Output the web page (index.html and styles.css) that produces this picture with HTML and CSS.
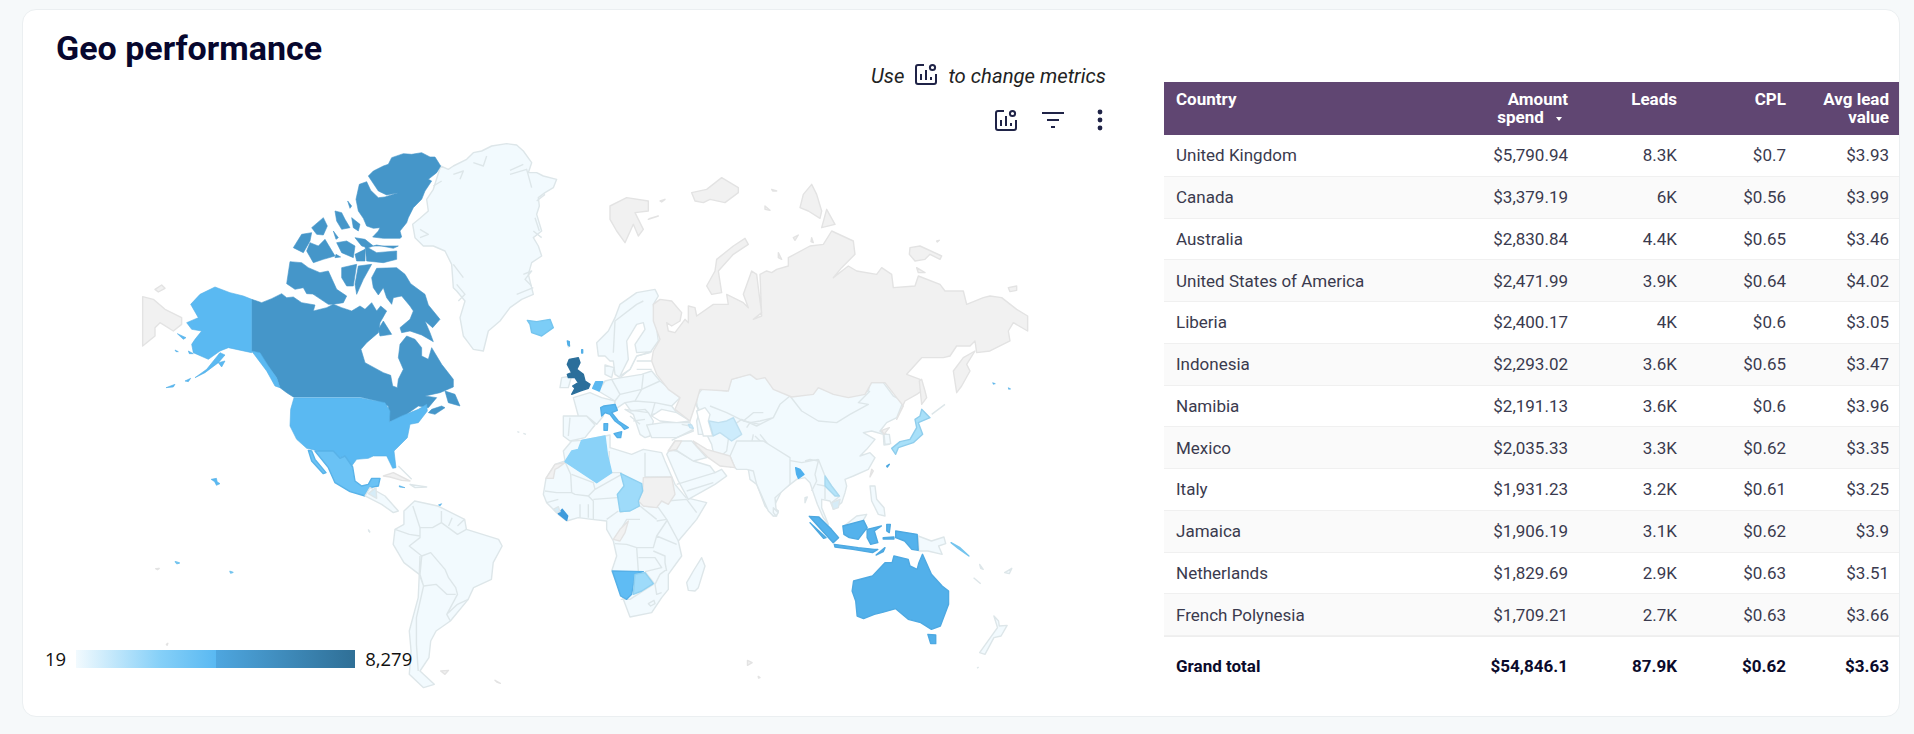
FILE: index.html
```html
<!DOCTYPE html>
<html lang="en">
<head>
<meta charset="utf-8">
<title>Geo performance</title>
<link rel="stylesheet" href="styles.css">
</head>
<body>
<main class="card">
  <section class="geo">
    <h1 class="title">Geo performance</h1>
    <p class="note">Use
      <svg class="ico note-ico" viewBox="0 0 24 24"><path d="M10 3H4a2 2 0 0 0-2 2v15a2 2 0 0 0 2 2h16a2 2 0 0 0 2-2v-8"/><path d="M7 18v-6M12 18V8M17 18v-3"/><circle cx="18.5" cy="5.5" r="2.6"/></svg>
      to change metrics</p>
    <div class="tools">
      <svg class="ico" viewBox="0 0 24 24"><path d="M10 3H4a2 2 0 0 0-2 2v15a2 2 0 0 0 2 2h16a2 2 0 0 0 2-2v-8"/><path d="M7 18v-6M12 18V8M17 18v-3"/><circle cx="18.5" cy="5.5" r="2.6"/></svg>
      <svg class="ico" viewBox="0 0 24 24"><path d="M1 5h22M6 12h12M10 19h4"/></svg>
      <svg class="ico dots" viewBox="0 0 24 24"><circle cx="12" cy="4" r="2.4"/><circle cx="12" cy="12" r="2.4"/><circle cx="12" cy="20" r="2.4"/></svg>
    </div>
    <div class="map-wrap">
      <svg class="map" viewBox="23 133 1141 583">
        <!-- Americas north, Greenland, Iceland: reference crop at 120,130 -->
        <g transform="translate(120 130) scale(.33333)">
          <path class="l" d="M962 105L985 115 1000 105 1040 85 1060 65 1085 60 1115 45 1160 38 1190 42 1210 60 1235 95 1225 125 1250 125 1270 135 1310 145 1300 170 1275 185 1255 200 1258 225 1250 250 1265 300 1240 320 1255 345 1265 375 1235 395 1225 430 1240 490 1205 505 1170 530 1140 570 1105 600 1090 660 1060 655 1045 635 1030 615 1020 560 1035 510 1010 480 1000 470 995 400 975 360 940 345 910 345 885 320 878 280 900 262 925 240 920 205 940 175Z"/>
          <path class="ln" d="M1000 130L1030 120 1020 145M1060 95L1090 105 1100 75M1170 130L1220 115 1235 170M1170 118L1210 100M1245 260L1258 300M1240 300L1265 320M1210 430L1235 420 1215 445 1235 465M1190 490L1240 470M1010 460L1035 490 1015 510M1000 400L1030 440M900 295L925 310 900 320M940 165L965 150M1250 210L1275 190"/>
          <path class="g" d="M68 497L100 505 135 535 185 560 185 580 160 600 120 575 105 590 105 615 68 645Z"/>
          <path class="g" d="M105 475L125 462 135 472 115 483Z"/>
          <g class="ca">
            <path d="M745 135L760 120 790 105 805 100 815 80 850 68 875 70 905 65 930 78 945 78 962 105 950 125 925 145 935 150 915 180 905 205 880 230 865 260 860 275 840 300 845 318 840 322 790 322 758 318 775 300 780 290 760 292 740 285 730 262 715 240 708 205 718 160 740 152 752 178 775 200 795 198 835 185 800 192 775 180Z"/>
            <path d="M683 210L695 225 690 232ZM645 240L665 245 675 265 690 290 665 295 650 270ZM695 260L720 280 715 300 700 290ZM575 290L610 260 622 285 610 312 590 310ZM520 350L545 310 575 305 570 330 550 365ZM560 360L570 335 595 345 615 325 645 375 610 385 580 395ZM640 300L655 320 648 325ZM650 335L680 330 705 345 700 380 665 365ZM705 320L735 325 760 345 745 350 725 345ZM735 345L770 365 830 360 830 385 790 395 740 390ZM760 345L835 345 820 352 770 342ZM705 370L735 355 735 390 710 390ZM648 370L662 378 645 380Z"/>
            <path d="M510 392L545 395 565 410 600 425 625 420 650 475 680 495 670 515 640 520 625 520 580 490 595 490 560 488 550 470 525 475 500 458Z"/>
            <path d="M665 410L710 400 700 465 680 465 665 440ZM715 405L755 400 730 445 710 490 705 460Z"/>
            <path d="M755 440L770 412 830 410 855 430 872 458 915 490 925 522 960 565 938 590 915 570 930 605 940 632 905 612 870 600 845 605 840 590 870 565 880 540 870 525 845 495 820 500 815 520 800 500 790 470 775 492 760 470Z"/>
            <path d="M395 505L425 515 455 503 485 488 500 500 520 498 545 515 585 522 580 540 620 530 640 520 665 530 695 540 720 525 735 535 755 515 770 540 782 525 800 540 780 575 775 605 740 635 723 655 735 695 790 725 812 733 818 765 832 770 835 745 850 715 835 680 840 640 860 615 885 625 905 650 905 675 925 685 935 650 965 700 1000 745 1000 768 960 785 915 795 950 800 925 830 895 825 845 860 808 872 805 825 770 810 720 798 520 798 500 785 480 770 470 740 440 700 395 660Z"/>
            <path d="M790 570L815 610 780 615 775 595ZM975 780L1005 790 1020 825 985 815ZM925 845L945 850 975 830 965 825 935 835Z"/>
          </g>
          <g class="us">
            <path d="M395 505L370 495 330 485 285 468 240 490 212 520 235 560 200 575 215 595 245 600 225 625 215 640 220 665 265 685 300 660 325 650 395 665Z"/>
            <path d="M395 660L420 665 445 705 470 740 480 770 465 765 440 720 410 680ZM300 665L315 672 295 695 255 725 225 740 260 715ZM172 608L198 620 190 625ZM165 657L175 662 168 662ZM205 660L220 668 208 668ZM295 695L315 690 305 708ZM195 750L212 742 205 752ZM138 770L165 760 160 768Z"/>
          </g>
          <path class="is" d="M1222 568L1250 572 1290 565 1300 590 1265 615 1235 605 1230 580Z"/>
          <path class="l" d="M1345 632L1350 645 1345 648Z"/>
        </g>
        <!-- Eurasia light land: reference crop at 730,370 -->
        <g transform="translate(730 370) scale(.33333)">
          <path class="l" d="M-100 75L-80 50-10 60 5 25 55 10 110 20 180 75 265 50 320 70 355 75 415 60 420 35 460 35 490 75 520 90 500 140 470 155 450 180 470 190 478 220 462 222 460 190 425 180 400 185 435 205 410 235 390 255 420 245 435 260 415 295 370 315 345 325 350 345 345 365 335 395 310 415 300 390 275 385 275 410 295 460 280 440 262 400 250 365 240 335 225 320 200 325 155 360 130 410 145 420 130 435 105 405 80 340 60 325 55 295 0 285-45 270-55 220-70 190-95 190-100 150-90 120-100 105Z"/>
          <path class="ln" d="M180 75L150 100 130 140 90 150 60 155 50 170M180 75L215 120 265 150 320 155 360 130 415 100 385 95 420 60M90 190L130 240 160 265 215 275 265 265M0 170L35 145 80 165 130 140M0 290L60 240 70 190M55 285L100 220 75 195M225 270L240 265 265 270 255 310 260 330 245 360M260 340L285 345 285 385M265 265L285 315M330 375L305 395M-60 160L0 170M-45 270L-10 240 0 170M60 240L130 240M450 180L462 190"/>
          <path class="l" d="M420 345L435 345 440 385 462 410 465 435 445 430 425 390ZM345 463L380 435 410 430 400 448 385 465ZM225 380L232 378 225 395ZM132 410L145 420 135 435ZM462 190L478 190 482 218 465 220Z"/>
          <path class="g" d="M425 295L430 300 420 318ZM462 190L478 170 455 178Z"/>
          <path class="gov" d="M305 395L330 385 325 410 310 415Z"/>
          <path class="bd" d="M197 290L210 295 222 310 205 322 200 310Z"/>
          <path class="la" d="M285 315L305 345 328 375 315 375 285 345Z"/>
          <path class="jp" d="M575 115L600 140 565 155 578 190 550 215 505 230 497 250 485 232 510 212 540 205 560 170 555 145 570 135Z"/>
          <path class="ln" d="M605 130L645 100"/>
          <path class="id" d="M470 285L478 280 472 288Z"/>
        </g>
        <!-- Europe: reference crop at 530,280 -->
        <g transform="translate(530 280) scale(.33333)">
          <path class="l" d="M200 185L235 150 255 110 270 70 320 35 375 25 385 45 370 70 385 180 360 215 320 225 300 265 270 290 255 280 250 240 240 240 225 225 205 225Z"/>
          <path class="w" d="M340 125L320 130 290 180 295 235 270 285 300 265 320 225 365 212 320 215 315 190 345 145Z"/>
          <path class="ln" d="M250 215L255 120 320 70M320 70L340 60"/>
          <path class="l" d="M130 350L180 335 215 350 255 360 250 385 215 380 220 405 200 430 170 405 145 405ZM100 405L170 405 195 432 165 470 120 480 100 465ZM95 290L125 285 115 320 90 320ZM225 252L252 260 245 290 225 280Z"/>
          <path class="l" d="M255 360L205 330 225 300 245 295 275 290 335 280 365 270 390 300 450 350 425 375 440 395 395 395 365 400 345 440 310 400 285 365 255 385Z"/>
          <path class="l" d="M285 385L310 400 330 460 345 470 360 465 370 420 355 395Z"/>
          <path class="w" d="M365 405L395 385 440 395 480 420 440 425 390 420Z"/>
          <path class="l" d="M350 432L400 425 440 425 480 425 490 450 440 470 365 470Z"/>
          <path class="ln" d="M245 295L270 340 255 360M270 340L335 325 340 280M335 325L390 300M335 325L315 360 285 365M315 360L375 365 425 375M375 365L365 400M300 390L345 385 355 395M300 405L330 430M455 430L480 435M120 410L115 465M310 420L345 415M320 240L365 240M320 265L365 265"/>
          <path class="w" d="M500 390L525 380 540 400 535 420 548 465 520 465 515 445 505 410Z"/>
          <path class="tm" d="M537 420L565 425 590 420 610 410 635 460 605 480 570 455 550 465Z"/>
          <path class="ln" d="M495 350L505 390M540 375L590 395 640 420 690 430M640 420L670 395 700 395"/>
          <path class="uk" d="M112 250L118 235 145 230 150 245 140 265 160 280 165 300 180 310 175 322 150 330 125 340 135 322 128 315 145 305 135 290 115 290 112 280 125 275Z"/>
          <path class="nl" d="M197 302L218 302 208 330 188 322Z"/>
          <path class="it" d="M212 380L222 375 255 370 262 388 245 395 265 420 295 440 283 445 275 435 255 420 240 400 225 395 215 405Z"/>
          <path class="it" d="M252 458L275 452 272 470 262 470ZM222 428L233 428 232 448 222 448ZM112 180L118 182 118 195 114 192ZM155 206L158 206 158 216 155 216Z"/>
          <path class="ln" d="M425 478L490 445"/>
          <path class="tm" d="M475 430L485 432 490 442 480 440Z"/>
        </g>
        <!-- Africa, Arabia: reference crop at 530,440 -->
        <g transform="translate(530 440) scale(.33333)">
          <path class="l" d="M48 112L75 70 105 60 100 30 125 0 155 -2 225 -15 240 -18 240 20 305 40 340 25 395 35 405 60 435 130 468 170 530 185 500 235 445 300 455 345 415 400 415 445 395 470 365 515 300 528 280 475 245 390 260 345 250 300 230 265 230 240 185 235 145 230 110 240 85 220 50 185 40 160Z"/>
          <path class="l" d="M410 40L420 25 440 30 490 60 540 75 555 95 575 85 590 105 555 130 475 175 445 120Z"/>
          <path class="l" d="M415 30L435 0 485 0 530 50 490 60 440 28Z"/>
          <path class="l" d="M515 350L525 375 505 440 495 450 475 448 470 425 490 390Z"/>
          <path class="l" d="M600 45L620 0 700 0 780 50 780 130 735 170 740 225 730 225 715 210 680 130 670 90 650 85 620 85 615 80Z"/>
          <path class="l" d="M730 200L745 215 738 225 730 215Z"/>
          <path class="ln" d="M345 35L345 108 425 108M238 30L235 95 275 95M45 150L80 155 125 155 122 100 105 62M125 100L190 125 195 145 175 165 135 160 125 155M195 145L275 100M175 165L190 180 190 235M190 175L262 170M230 235L265 210M270 215L330 195 380 235M340 195L385 200 410 235 380 240M330 235L290 235 270 270M410 235L445 300M410 240L380 285 440 310M380 285L370 320 320 320 290 310 255 308M320 320L325 390M370 330L405 345 405 365 410 390M325 350L375 350 395 380 345 392M345 392L375 430 390 400 410 385M375 430L380 460 395 455M272 475L300 475 370 430M470 150L550 125M410 180L470 175 500 215M440 130L555 95M150 190L150 230M175 190L175 230M50 185L85 175"/>
          <path class="ln" d="M355 488L372 478 375 488 362 495Z"/>
          <path class="g" d="M48 112L75 70 105 65 85 80 75 85 70 112ZM340 110L425 108 435 160 415 190 395 180 380 200 340 195 325 180 338 150ZM295 240L285 275 270 300 250 295 270 265ZM490 0L530 25 600 45 615 80 570 75 535 50 500 15ZM415 30L435 0 455 0 440 25Z"/>
          <path class="dz" d="M155 -2L225 -15 232 40 245 95 200 125 105 62 125 30 145 25Z"/>
          <path class="td" d="M272 97L335 128 338 150 325 180 328 195 300 210 270 212 262 160 282 135Z"/>
          <path class="na" d="M247 390L340 392 315 400 305 460 290 475 272 465Z"/>
          <path class="td" d="M315 400L345 395 370 428 335 450 310 460Z"/>
          <path class="lr" d="M85 218L97 205 113 225 110 238Z"/>
          <path class="gov" d="M70 205L85 197 90 212 80 215Z"/>
        </g>
        <!-- North and middle America: reference crop at 270,370 -->
        <g transform="translate(270 370) scale(.33333)">
          <g class="us">
            <path d="M72 80L270 80 345 95 360 120 358 153 395 135 445 115 470 100 472 120 445 155 420 160 412 200 372 240 378 290 368 292 350 255 310 255 295 262 260 265 245 285 225 255 205 262 190 240 145 240 110 232 80 205 60 165 62 115Z"/>
          </g>
          <path class="mx" d="M135 240L190 240 210 262 225 255 248 288 255 330 275 345 295 340 305 322 330 322 325 345 300 350 285 375 240 362 195 335 175 290Z"/>
          <path class="mx" d="M115 238L125 240 135 265 168 305 160 308 125 270Z"/>
          <path class="l" d="M285 375L300 350 345 375 385 420 370 425 335 400Z"/>
          <path class="gov" d="M295 368L318 350 320 382Z"/>
          <path class="g" d="M340 315L370 305 420 330 395 328 360 318Z"/>
          <path class="l" d="M420 340L470 348 435 350Z"/>
          <path class="us" d="M388 344L405 350 388 348ZM505 402L515 398 510 405Z"/>
          <path class="ln" d="M385 285L410 310 425 325M295 478L300 484M742 182L748 184M760 187L768 190"/>
        </g>
        <!-- South America and ocean islands: reference crop at 20,430 -->
        <g transform="translate(20 430) scale(.35714 .33333)">
          <path class="l" d="M1075 240L1105 210 1170 225 1245 265 1250 295 1340 325 1350 345 1325 395 1320 445 1270 470 1255 505 1205 570 1165 600 1150 630 1145 680 1120 720 1160 760 1130 770 1090 730 1095 660 1090 600 1115 500 1118 430 1075 395 1045 340 1050 295 1075 280Z"/>
          <path class="ln" d="M1250 295L1225 310 1180 275 1155 290 1120 290 1120 320 1090 345 1125 375 1150 365 1190 415 1200 440 1220 470 1225 490 1195 550 1205 570M1100 225L1120 290M1050 295L1090 310 1120 315M1120 375L1118 430M1125 375L1120 430 1130 465 1165 460 1195 490 1220 490M1118 430L1130 465 1110 560 1110 640 1115 720M1195 550L1225 520 1255 505M1180 240L1180 275M1210 260L1200 285M1245 265L1225 285"/>
          <path class="g" d="M1178 720L1200 718 1190 730ZM1330 748L1345 757 1335 753ZM380 413L390 412 385 416ZM410 640L414 637 412 643Z"/>
          <path class="us" d="M535 145L550 142 552 152 560 158 550 163 545 152Z"/>
          <path class="is" d="M435 392L446 396 440 398ZM588 421L596 424 590 426Z"/>
          <path class="ln" d="M975 295L980 304"/>
        </g>
        <!-- Russia and Arctic: reference crop at 600,130 -->
        <g transform="translate(600 130) scale(.33333)">
          <path class="g" d="M180 505L215 510 245 545 240 570 215 585 200 575 205 600 225 605 255 565 265 575 265 525 285 530 290 555 340 520 385 520 380 490 430 515 445 530 430 490 455 420 470 430 480 510 485 545 460 565 485 555 480 430 500 420 515 425 530 415 565 405 565 380 630 345 670 340 695 300 760 330 765 370 725 410 700 440 745 405 770 420 830 430 845 410 875 430 880 470 945 465 955 435 1020 460 1035 480 1090 480 1100 520 1150 500 1170 495 1205 500 1250 535 1283 555 1283 600 1240 575 1225 600 1230 630 1170 660 1130 665 1125 630 1110 645 1070 645 1050 675 1030 680 965 680 920 730 960 745 965 780 950 790 915 810 890 865 910 825 890 800 855 755 815 755 795 790 745 800 700 790 655 770 640 790 575 798 520 775 495 740 470 745 450 730 395 745 385 780 300 775 290 810 270 870 225 835 240 800 205 775 170 730 155 690 160 660 180 625 160 570 160 520Z"/>
          <path class="g" d="M1070 785L1060 720 1090 680 1125 660 1100 700 1110 720 1085 765ZM965 745L975 780 980 800 965 820 958 750ZM335 490L320 465 345 420 350 385 400 345 435 322 445 340 400 370 355 420 365 485ZM30 225L80 200 145 210 145 240 105 245 130 295 115 315 100 280 75 335 50 300 30 265ZM275 185L320 175 365 140 415 170 415 185 375 215 330 205 310 215 285 210ZM610 190L635 160 650 190 665 240 660 262 625 240 600 230ZM680 235L705 280 665 290ZM930 350L960 345 1025 375 1020 385 990 370 975 385 945 390 928 370ZM950 410L975 425 955 425ZM1225 470L1250 465 1250 478 1230 482ZM495 225L510 238 495 235ZM580 320L595 312 585 328ZM635 320L640 335 633 332ZM535 365L545 385 535 380ZM515 175L530 180 518 180ZM180 210L195 205 185 213ZM145 265L175 255 150 262ZM1010 330L1018 328 1012 333Z"/>
          <path class="us" d="M1178 755L1186 758 1180 760ZM1225 770L1232 774 1226 775Z"/>
        </g>
        <!-- Indonesia, Oceania: reference crop at 560,430 -->
        <g transform="translate(560 430) scale(.35714 .33333)">
          <path class="l" d="M1003 315L1040 330 1075 318 1080 338 1060 345 1070 370 1030 360 1005 360ZM1215 555L1228 570 1230 585 1252 583 1235 615 1215 620 1190 670 1175 665 1205 620 1225 590Z"/>
          <path class="l" d="M1175 400L1185 415 1178 412ZM1245 425L1265 412 1258 428Z"/>
          <path class="g" d="M525 688L538 695 525 703ZM555 736L560 740 556 741Z"/>
          <path class="ln" d="M1158 440L1178 458M1168 712L1172 708"/>
          <g class="ids">
            <path d="M698 256L725 258 760 295 780 320 765 335 735 300ZM768 340L835 350 880 355 890 355 875 365 820 355 770 348ZM792 285L850 268 860 290 835 325 810 320 795 310ZM860 295L900 285 880 300 890 335 870 340 860 320ZM905 320L935 318 935 324 905 324ZM885 372L910 350 905 362ZM915 280L925 280 922 305 915 300ZM940 300L1000 310 1003 358 985 355 965 330 940 320ZM700 275L745 320 738 322Z"/>
          </g>
          <path class="is" d="M1095 335L1120 350 1145 375 1115 352Z"/>
          <path class="au" d="M822 450L875 435 910 395 930 395 935 375 975 385 980 405 1000 415 1005 395 1015 370 1040 430 1070 465 1088 480 1088 520 1065 585 1040 595 1010 575 975 565 940 533 900 545 880 550 850 563 832 555 828 510 818 480Z"/>
          <path class="au" d="M1030 610L1052 612 1052 638 1038 638Z"/>
        </g>
      </svg>
      <div class="legend">
        <span>19</span>
        <div class="ramp"></div>
        <span>8,279</span>
      </div>
    </div>
  </section>
  <section class="table">
    <div class="row head">
      <div class="cell name">Country</div>
      <div class="cell">Amount<br>spend <span class="sort"></span></div>
      <div class="cell">Leads</div>
      <div class="cell">CPL</div>
      <div class="cell">Avg lead<br>value</div>
    </div>
    <div class="row"><div class="cell name">United Kingdom</div><div class="cell">$5,790.94</div><div class="cell">8.3K</div><div class="cell">$0.7</div><div class="cell">$3.93</div></div>
    <div class="row alt"><div class="cell name">Canada</div><div class="cell">$3,379.19</div><div class="cell">6K</div><div class="cell">$0.56</div><div class="cell">$3.99</div></div>
    <div class="row"><div class="cell name">Australia</div><div class="cell">$2,830.84</div><div class="cell">4.4K</div><div class="cell">$0.65</div><div class="cell">$3.46</div></div>
    <div class="row alt"><div class="cell name">United States of America</div><div class="cell">$2,471.99</div><div class="cell">3.9K</div><div class="cell">$0.64</div><div class="cell">$4.02</div></div>
    <div class="row"><div class="cell name">Liberia</div><div class="cell">$2,400.17</div><div class="cell">4K</div><div class="cell">$0.6</div><div class="cell">$3.05</div></div>
    <div class="row alt"><div class="cell name">Indonesia</div><div class="cell">$2,293.02</div><div class="cell">3.6K</div><div class="cell">$0.65</div><div class="cell">$3.47</div></div>
    <div class="row"><div class="cell name">Namibia</div><div class="cell">$2,191.13</div><div class="cell">3.6K</div><div class="cell">$0.6</div><div class="cell">$3.96</div></div>
    <div class="row alt"><div class="cell name">Mexico</div><div class="cell">$2,035.33</div><div class="cell">3.3K</div><div class="cell">$0.62</div><div class="cell">$3.35</div></div>
    <div class="row"><div class="cell name">Italy</div><div class="cell">$1,931.23</div><div class="cell">3.2K</div><div class="cell">$0.61</div><div class="cell">$3.25</div></div>
    <div class="row alt"><div class="cell name">Jamaica</div><div class="cell">$1,906.19</div><div class="cell">3.1K</div><div class="cell">$0.62</div><div class="cell">$3.9</div></div>
    <div class="row"><div class="cell name">Netherlands</div><div class="cell">$1,829.69</div><div class="cell">2.9K</div><div class="cell">$0.63</div><div class="cell">$3.51</div></div>
    <div class="row alt"><div class="cell name">French Polynesia</div><div class="cell">$1,709.21</div><div class="cell">2.7K</div><div class="cell">$0.63</div><div class="cell">$3.66</div></div>
    <div class="row total"><div class="cell name">Grand total</div><div class="cell">$54,846.1</div><div class="cell">87.9K</div><div class="cell">$0.62</div><div class="cell">$3.63</div></div>
  </section>
</main>
</body>
</html>
```
FILE: styles.css
```css
* { box-sizing: border-box; }
html, body { margin: 0; height: 734px; overflow: hidden; }
body {
  background: #f6f9fa;
  padding: 9px 14px 0 22px;
  font-family: Roboto, "Liberation Sans", sans-serif;
}
.card {
  height: 708px;
  display: grid;
  grid-template-columns: 1fr 735px;
  background: #fff;
  border: 1px solid #ebeff1;
  border-radius: 14px;
}
.geo { display: flex; flex-direction: column; min-width: 0; padding-top: 18px; }
.title {
  margin: 0 0 0 33px;
  font-size: 34px;
  line-height: 40px;
  font-weight: 700;
  color: #07072e;
}
.note {
  margin: -5px 58px 0 0;
  height: 26px;
  display: flex;
  justify-content: flex-end;
  align-items: center;
  gap: 10px;
  font-size: 20.3px;
  font-style: italic;
  color: #222;
}
.ico { width: 24px; height: 24px; fill: none; stroke: #1f2347; stroke-width: 2; flex: none; }
.note-ico { margin-top: -5px; }
.tools {
  margin: 19px 52px 0 0;
  height: 24px;
  display: flex;
  justify-content: flex-end;
  gap: 23px;
}
.dots { fill: #1f2347; stroke: none; }
.map-wrap { position: relative; height: 583px; margin-top: 2px; }
.map { display: block; width: 100%; height: 100%; }
.map path { vector-effect: non-scaling-stroke; stroke-width: 1.4; stroke-linejoin: round; }
.l { fill: #f2fafe; stroke: #dde6e9; }
.g { fill: #f1f1f1; stroke: #e3e3e3; }
.w { fill: #fff; stroke: #dde6e9; }
.ln { fill: none; stroke: #dde6e9; }
.gov { fill: #d6ecf7; stroke: #dde6e9; }
.map .ca path { fill: #4596c9; stroke: #4596c9; stroke-width: .6; }
.map .us, .map .us path { fill: #5ab9f2; stroke: #52aee6; stroke-width: .6; }
.is { fill: #7ccdf7; stroke: #74c4ee; }
.mx { fill: #6ac2f5; stroke: #58b2e8; }
.id, .ids path { fill: #54b2ec; stroke: #4da8e0; }
.au { fill: #52b0ea; stroke: #4ea9e2; }
.uk { fill: #2b6f9b; stroke: #2b6f9b; }
.nl { fill: #5cb8f0; stroke: #5cb8f0; }
.it { fill: #5ab9f2; stroke: #52aee6; }
.dz { fill: #8ad2f8; stroke: #8ad2f8; }
.td { fill: #9edbfa; stroke: #8fd0f0; }
.na { fill: #5fbcf4; stroke: #55b0e8; }
.lr { fill: #3f9bdc; stroke: #3f9bdc; }
.tm { fill: #cdecfc; stroke: #c0e0f0; }
.bd { fill: #4eb0ee; stroke: #4eb0ee; }
.la { fill: #b4e4fa; stroke: #a8d8ee; }
.jp { fill: #a8e0f9; stroke: #8fcdec; }
.legend {
  position: absolute;
  left: 22px;
  top: 515px;
  display: flex;
  align-items: center;
  gap: 10px;
  font-family: "Open Sans", sans-serif;
  font-size: 18.5px;
  line-height: 20px;
  color: #111;
}
.ramp {
  width: 279px;
  height: 18px;
  background: linear-gradient(90deg, #f2fafe 0, #86d0f8 30%, #5ab9f2 50%, #4ea6df 50.3%, #2f6f96 100%);
}
.table { padding-top: 72px; font-size: 17px; color: #3a3a4e; }
.row {
  display: grid;
  grid-template-columns: 1fr 129px 109px 109px 103px;
  height: 41.75px;
  align-items: center;
  border-bottom: 1px solid #f0f0f0;
}
.alt { background: #fafafa; }
.cell { text-align: right; padding-right: 10px; }
.name { text-align: left; padding: 0 0 0 12px; }
.head {
  height: 53px;
  align-items: start;
  padding-top: 8px;
  background: #604672;
  color: #fff;
  font-weight: 700;
  line-height: 18px;
  border-bottom: 0;
}
.sort {
  display: inline-block;
  margin: 0 6px 2px 8px;
  border: 3px solid transparent;
  border-top: 4px solid #fff;
  border-bottom: 0;
}
.total { height: 59px; font-weight: 700; color: #0b0b2b; border-bottom: 0; border-top: 1px solid #eee; }
```
